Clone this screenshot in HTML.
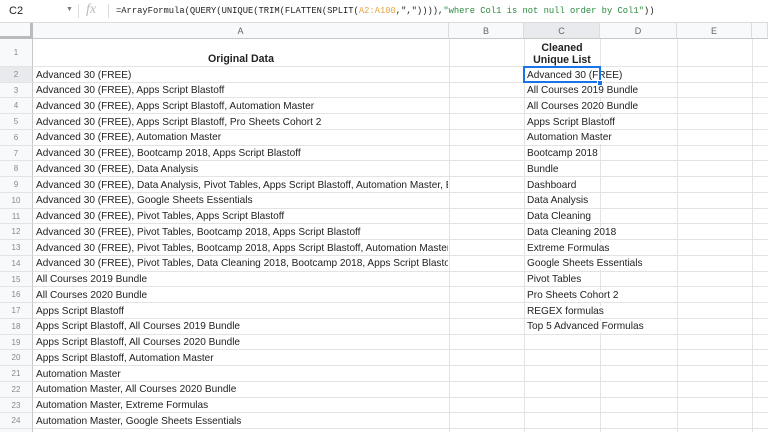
<!DOCTYPE html>
<html><head><meta charset="utf-8">
<style>
*{margin:0;padding:0;box-sizing:border-box}
html,body{width:768px;height:432px;overflow:hidden}
body{background:#fff;font-family:"Liberation Sans",Arial,sans-serif;position:relative}
.fb{position:absolute;left:0;top:0;width:768px;height:23px;background:#fff;border-bottom:1px solid #dadce0}
.fb .nm{position:absolute;left:9px;top:5px;font-size:11px;color:#222}
.fb .dd{position:absolute;left:66px;top:6px;font-size:7px;color:#777}
.fb .sep{position:absolute;top:4px;width:1px;height:14px;background:#dadce0}
.fb .fx{position:absolute;left:86px;top:2px;font-family:"Liberation Serif",serif;font-style:italic;font-size:14px;color:#bbb}
.fb .f{position:absolute;left:116px;top:6px;font-family:"Liberation Mono",monospace;font-size:8.8px;color:#222;white-space:nowrap}
.o{color:#e8a33d}.g{color:#2b8a3e}
.hdr{position:absolute;top:23px;height:16px;background:#f8f9fa;border-right:1px solid #dadce0;border-bottom:1px solid #c8c8c8;font-size:9px;color:#666;text-align:center;line-height:16px}
.rh{position:absolute;left:0;width:33px;background:#f8f9fa;border-right:1px solid #c8c8c8;border-bottom:1px solid #e2e3e3;font-size:8px;color:#888;text-align:center}
.row{position:absolute;left:33px;width:735px;border-bottom:1px solid #e2e3e3}
.vl{position:absolute;top:39px;width:1px;height:393px;background:#e2e3e3}
.c{position:absolute;font-size:10.1px;color:#222;white-space:nowrap;overflow:hidden}
.cc{background:#fff;padding-right:2px}
</style></head><body>
<div class="fb">
<span class="nm">C2</span><span class="dd">▼</span>
<div class="sep" style="left:78px"></div>
<span class="fx">fx</span>
<div class="sep" style="left:108px"></div>
<span class="f">=ArrayFormula(QUERY(UNIQUE(TRIM(FLATTEN(SPLIT(<span class="o">A2:A100</span>,",")))),<span class="g">"where Col1 is not null order by Col1"</span>))</span>
</div>
<div class="hdr" style="left:0;width:33px;border-right:3px solid #bbb;border-bottom:3px solid #bbb"></div>
<div class="hdr" style="left:33px;width:416px">A</div>
<div class="hdr" style="left:449px;width:75px">B</div>
<div class="hdr" style="left:524px;width:76px;background:#e8eaed">C</div>
<div class="hdr" style="left:600px;width:77px">D</div>
<div class="hdr" style="left:677px;width:75px">E</div>
<div class="hdr" style="left:752px;width:16px"></div>

<div class="vl" style="left:449px"></div>
<div class="vl" style="left:524px"></div>
<div class="vl" style="left:600px"></div>
<div class="vl" style="left:677px"></div>
<div class="vl" style="left:752px"></div>

<div class="rh" style="top:39px;height:28px;line-height:28px">1</div>
<div class="row" style="top:39px;height:28px"></div>
<div class="c" style="left:33px;top:53px;width:416px;text-align:center;font-weight:bold;font-size:10.6px">Original Data</div>
<div class="c" style="left:524px;top:42px;width:76px;text-align:center;font-weight:bold;line-height:12px;font-size:10.6px">Cleaned<br>Unique List</div>

<div id="rows"></div>
<script>
var A=["Advanced 30 (FREE)","Advanced 30 (FREE), Apps Script Blastoff","Advanced 30 (FREE), Apps Script Blastoff, Automation Master","Advanced 30 (FREE), Apps Script Blastoff, Pro Sheets Cohort 2","Advanced 30 (FREE), Automation Master","Advanced 30 (FREE), Bootcamp 2018, Apps Script Blastoff","Advanced 30 (FREE), Data Analysis","Advanced 30 (FREE), Data Analysis, Pivot Tables, Apps Script Blastoff, Automation Master, Extreme Formulas","Advanced 30 (FREE), Google Sheets Essentials","Advanced 30 (FREE), Pivot Tables, Apps Script Blastoff","Advanced 30 (FREE), Pivot Tables, Bootcamp 2018, Apps Script Blastoff","Advanced 30 (FREE), Pivot Tables, Bootcamp 2018, Apps Script Blastoff, Automation Master","Advanced 30 (FREE), Pivot Tables, Data Cleaning 2018, Bootcamp 2018, Apps Script Blastoff","All Courses 2019 Bundle","All Courses 2020 Bundle","Apps Script Blastoff","Apps Script Blastoff, All Courses 2019 Bundle","Apps Script Blastoff, All Courses 2020 Bundle","Apps Script Blastoff, Automation Master","Automation Master","Automation Master, All Courses 2020 Bundle","Automation Master, Extreme Formulas","Automation Master, Google Sheets Essentials","Bootcamp 2018"];
var C=["Advanced 30 (FREE)","All Courses 2019 Bundle","All Courses 2020 Bundle","Apps Script Blastoff","Automation Master","Bootcamp 2018","Bundle","Dashboard","Data Analysis","Data Cleaning","Data Cleaning 2018","Extreme Formulas","Google Sheets Essentials","Pivot Tables","Pro Sheets Cohort 2","REGEX formulas","Top 5 Advanced Formulas"];
var h="";
for(var i=0;i<24;i++){var r=i+2,t=67+i*15.74;
h+='<div class="rh" style="top:'+t+'px;height:15.74px;line-height:15.74px;'+(r==2?'background:#e8eaed;':'')+'">'+r+'</div>';
h+='<div class="row" style="top:'+t+'px;height:15.74px"></div>';
h+='<div class="c" style="left:36px;top:'+(t+2.5)+'px;width:412px">'+A[i]+'</div>';
if(C[i])h+='<div class="c cc" style="left:526px;padding-left:1px;top:'+(t+2.5)+'px;line-height:12px">'+C[i]+'</div>';}
h+='<div style="position:absolute;left:523px;top:66px;width:78px;height:17px;border:2px solid #1a73e8"></div>';
h+='<div style="position:absolute;left:597px;top:80px;width:6px;height:6px;background:#1a73e8;border:1px solid #fff"></div>';
document.getElementById("rows").innerHTML=h;
</script>
</body></html>
